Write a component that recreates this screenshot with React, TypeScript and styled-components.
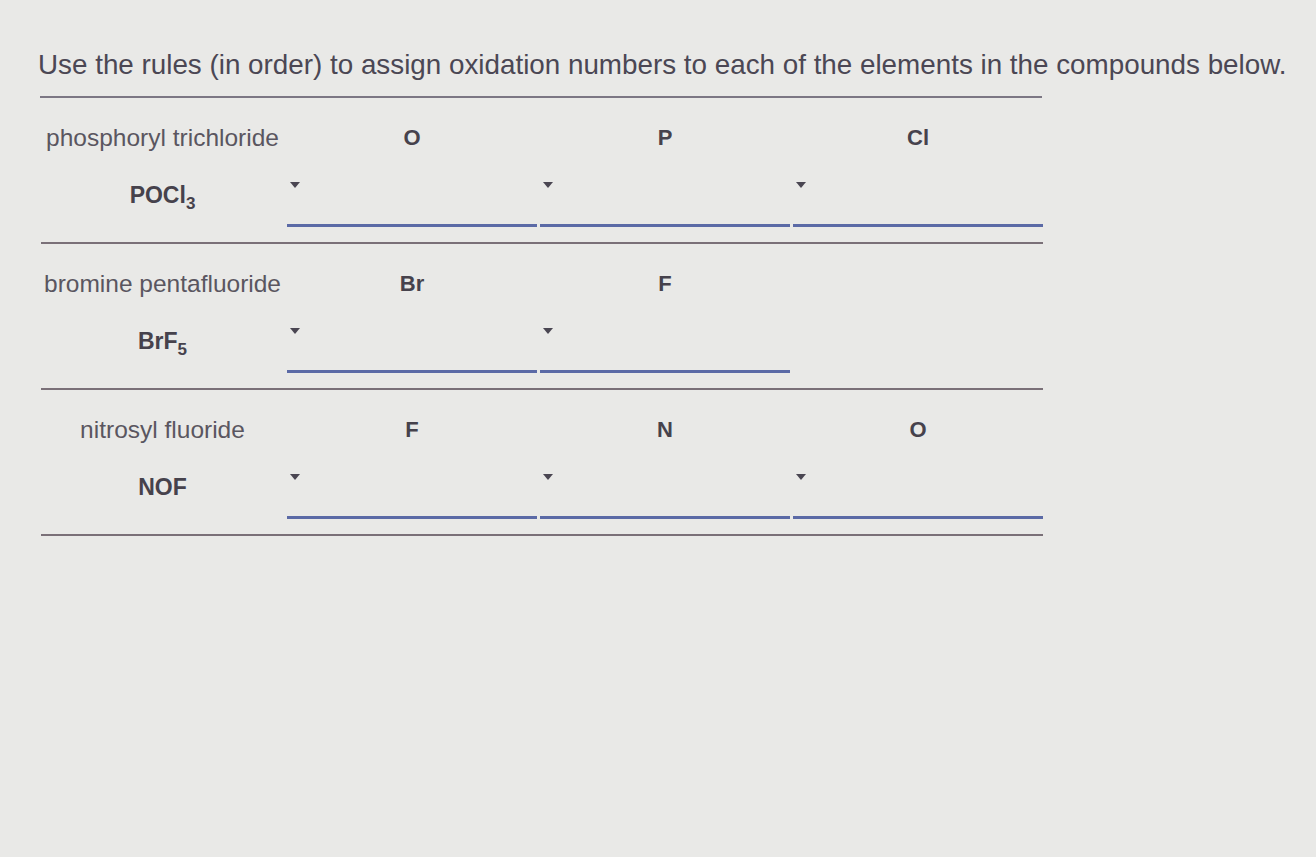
import React from "react";
import styled, { createGlobalStyle } from "styled-components";

const GlobalStyle = createGlobalStyle`
  html, body {
    margin: 0;
    padding: 0;
    background: #e9e9e7;
  }
  body {
    font-family: "Liberation Sans", Arial, sans-serif;
    color: #4a4652;
  }
`;

interface Compound {
  name: string;
  formula: React.ReactNode;
  elements: string[];
}

const COMPOUNDS: Compound[] = [
  {
    name: "phosphoryl trichloride",
    formula: (
      <>
        POCl<sub>3</sub>
      </>
    ),
    elements: ["O", "P", "Cl"],
  },
  {
    name: "bromine pentafluoride",
    formula: (
      <>
        BrF<sub>5</sub>
      </>
    ),
    elements: ["Br", "F"],
  },
  {
    name: "nitrosyl fluoride",
    formula: "NOF",
    elements: ["F", "N", "O"],
  },
];

const Page = styled.div`
  width: 1316px;
  height: 857px;
  box-sizing: border-box;
  padding: 45px 0 0 38px;
`;

const Title = styled.h1`
  margin: 0;
  font-size: 27.8px;
  font-weight: 400;
  line-height: 40px;
  color: #4b4754;
  white-space: nowrap;
`;

const TitleRule = styled.div`
  width: 1002px;
  height: 2px;
  margin: 11px 0 0 2px;
  background: #7c7784;
`;

const Block = styled.section`
  width: 1002px;
  margin-left: 3px;
  display: grid;
  grid-template-columns: 243px 250px 250px 250px;
  column-gap: 3px;
  padding-top: 25px;
  border-bottom: 2px solid #7a7078;
`;

const Name = styled.div`
  font-size: 24.5px;
  line-height: 30px;
  text-align: center;
  color: #5a5660;
  white-space: nowrap;
`;

const ElementLabel = styled.div`
  font-size: 22px;
  font-weight: 700;
  line-height: 30px;
  text-align: center;
  color: #46424c;
`;

const Formula = styled.div`
  font-size: 23px;
  font-weight: 700;
  text-align: center;
  padding-top: 29px;
  color: #46424c;

  sub {
    font-size: 17px;
    vertical-align: -6px;
    line-height: 0;
  }
`;

const Select = styled.div`
  height: 66px;
  margin-top: 8px;
  margin-bottom: 15px;
  box-sizing: border-box;
  padding: 21px 0 0 3px;
  border-bottom: 3px solid #5b6aa6;
`;

const Arrow = styled.span`
  display: block;
  width: 0;
  height: 0;
  border-left: 5px solid transparent;
  border-right: 5px solid transparent;
  border-top: 6px solid #4a4652;
`;

const Empty = styled.div``;

export default function App() {
  return (
    <>
      <GlobalStyle />
      <Page>
        <Title>
          Use the rules (in order) to assign oxidation numbers to each of the
          elements in the compounds below.
        </Title>
        <TitleRule />
        {COMPOUNDS.map((c) => (
          <Block key={c.name}>
            <Name>{c.name}</Name>
            {[0, 1, 2].map((i) =>
              c.elements[i] ? (
                <ElementLabel key={i}>{c.elements[i]}</ElementLabel>
              ) : (
                <Empty key={i} />
              )
            )}
            <Formula>{c.formula}</Formula>
            {[0, 1, 2].map((i) =>
              c.elements[i] ? (
                <Select key={i}>
                  <Arrow />
                </Select>
              ) : (
                <Empty key={i} />
              )
            )}
          </Block>
        ))}
      </Page>
    </>
  );
}
